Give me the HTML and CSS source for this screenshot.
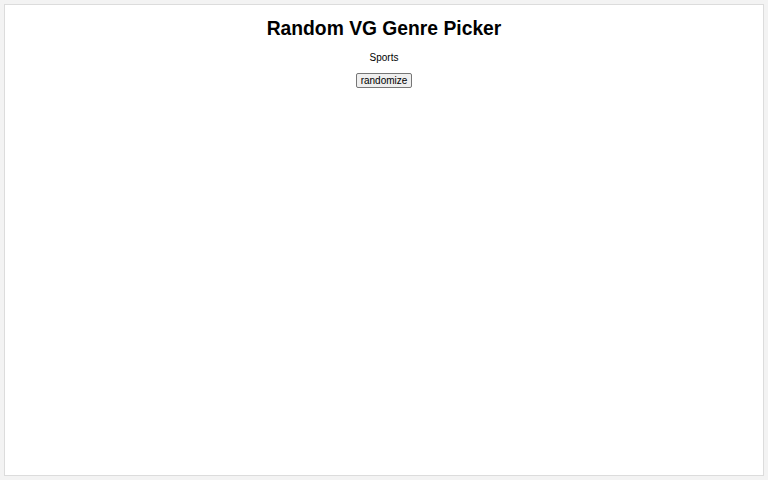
FILE: index.html
```html
<!DOCTYPE html>
<html lang="en">
<head>
<meta charset="utf-8">
<title>Random VG Genre Picker</title>
<link rel="stylesheet" href="styles.css">
</head>
<body>
<main class="panel">
  <h1 class="title">Random VG Genre Picker</h1>
  <p class="genre">Sports</p>
  <button class="randomize" type="button">randomize</button>
</main>
</body>
</html>
```
FILE: styles.css
```css
html, body {
  margin: 0;
  height: 100%;
}

body {
  background: #f3f3f3;
  padding: 4px;
  box-sizing: border-box;
  font-family: "Liberation Sans", Arial, sans-serif;
  color: #000;
}

.panel {
  box-sizing: border-box;
  height: 472px;
  background: #fff;
  border: 1px solid #dcdcdc;
  display: flex;
  flex-direction: column;
  align-items: center;
  padding-top: 12px;
}

.title {
  margin: 0;
  font-size: 19.3px;
  font-weight: bold;
  line-height: 23px;
}

.genre {
  margin: 12px 0 0;
  font-size: 10px;
  line-height: 12px;
}

.randomize {
  margin-top: 9px;
  font-family: "Liberation Sans", Arial, sans-serif;
  font-size: 10px;
  padding: 1px 4px;
  background: #efefef;
  border: 1px solid #767676;
  border-radius: 2px;
  color: #000;
}
```
